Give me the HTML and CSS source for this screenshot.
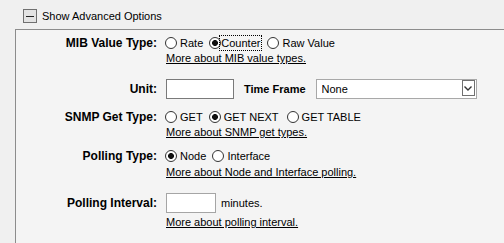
FILE: index.html
```html
<!DOCTYPE html>
<html lang="en">
<head>
  <meta charset="UTF-8">
  <title>Advanced Options</title>
  <link rel="stylesheet" href="styles.css">
</head>
<body>
<div class="toggle">
  <span class="toggle-box"><span class="minus"></span></span>
  <span>Show Advanced Options</span>
</div>
<div class="panel">
  <div class="row row-mib">
    <div class="label">MIB Value Type:</div>
    <div class="value">
      <div class="radios">
        <label class="opt"><input type="radio" name="mib"> Rate</label>
        <label class="opt"><input type="radio" name="mib" checked> <span class="focus">Counter</span></label>
        <label class="opt"><input type="radio" name="mib"> Raw Value</label>
      </div>
      <a href="#" class="more">More about MIB value types.</a>
    </div>
  </div>
  <div class="row row-unit">
    <div class="label">Unit:</div>
    <div class="value inline">
      <input type="text" class="text unit">
      <span class="sublabel">Time Frame</span>
      <div class="combo">
        <select>
          <option>None</option>
        </select>
        <span class="drop">
          <svg width="8" height="5" viewBox="0 0 8 5"><path d="M0.5 0.5 L4 4 L7.5 0.5" fill="none" stroke="#333" stroke-width="1.4"/></svg>
        </span>
      </div>
    </div>
  </div>
  <div class="row row-snmp">
    <div class="label">SNMP Get Type:</div>
    <div class="value">
      <div class="radios">
        <label class="opt"><input type="radio" name="snmp"> GET</label>
        <label class="opt wide"><input type="radio" name="snmp" checked> GET NEXT</label>
        <label class="opt"><input type="radio" name="snmp"> GET TABLE</label>
      </div>
      <a href="#" class="more">More about SNMP get types.</a>
    </div>
  </div>
  <div class="row row-poll">
    <div class="label">Polling Type:</div>
    <div class="value">
      <div class="radios">
        <label class="opt"><input type="radio" name="poll" checked> Node</label>
        <label class="opt"><input type="radio" name="poll"> Interface</label>
      </div>
      <a href="#" class="more">More about Node and Interface polling.</a>
    </div>
  </div>
  <div class="row row-interval">
    <div class="label">Polling Interval:</div>
    <div class="value">
      <div class="inline">
        <input type="text" class="text interval">
        <span>minutes.</span>
      </div>
      <a href="#" class="more more-interval">More about polling interval.</a>
    </div>
  </div>
</div>
</body>
</html>
```

FILE: styles.css
```css
body {
  margin: 0;
  background-color: #f0f0f0;
  font-family: "Liberation Sans", Arial, sans-serif;
  font-size: 11px;
  color: #000;
  height: 243px;
  overflow: hidden;
}
.toggle {
  display: flex;
  align-items: center;
  gap: 5px;
  padding: 9px 0 0 23px;
  line-height: 14px;
}
.toggle-box {
  width: 12px;
  height: 12px;
  border: 1px solid #707070;
  background-color: #e3e3e3;
  display: flex;
  align-items: center;
  justify-content: center;
}
.minus {
  width: 8px;
  height: 1px;
  background-color: #222;
}
.panel {
  margin: 6px 0 0 15px;
  border-top: 1px solid #8c8c8c;
  border-left: 1px solid #8c8c8c;
  background-color: #f4f4f4;
  height: 207px;
  padding-top: 6px;
}
.row {
  display: flex;
  align-items: flex-start;
}
.label {
  width: 141px;
  text-align: right;
  font-size: 12px;
  font-weight: bold;
  line-height: 14px;
  flex-shrink: 0;
}
.value {
  margin-left: 9px;
  line-height: 14px;
}
.inline {
  display: flex;
  align-items: center;
}
.radios {
  display: flex;
  align-items: center;
  height: 14px;
}
.opt {
  display: flex;
  align-items: center;
  margin-right: 7px;
  white-space: pre;
}
.opt.wide {
  margin-right: 9px;
}
.opt input {
  appearance: none;
  -webkit-appearance: none;
  width: 12px;
  height: 12px;
  margin: 0 0 0 -1px;
  border: 1px solid #333;
  border-radius: 50%;
  background-color: #fff;
}
.opt input:checked {
  background: radial-gradient(circle, #111 0, #111 2.6px, #fff 3.3px);
}
.focus {
  outline: 1px dotted #000;
  outline-offset: 0;
  padding: 0 1px;
  margin-left: -1px;
}
.more {
  display: block;
  margin-top: 1px;
  color: #000;
  text-decoration: underline;
}
.row-unit {
  margin-top: 14px;
  align-items: center;
}
.text {
  box-sizing: border-box;
  height: 20px;
  margin: 0;
  padding: 0 3px;
  background-color: #fff;
  font: inherit;
}
.unit {
  width: 68px;
  border: 1px solid #7a7a7a;
}
.sublabel {
  font-weight: bold;
  margin: 0 10px;
}
.combo {
  display: flex;
  align-items: flex-start;
  box-sizing: border-box;
  width: 161px;
  height: 20px;
  border: 1px solid #a8a8a8;
  background-color: #fff;
}
.combo select {
  appearance: none;
  -webkit-appearance: none;
  flex: 1;
  border: none;
  background: transparent;
  font: inherit;
  height: 18px;
  padding: 0 0 0 5px;
  margin: 0;
  outline: none;
}
.drop {
  box-sizing: border-box;
  width: 13px;
  height: 16px;
  margin: 0 1px 0 0;
  border: 1px solid #707070;
  display: flex;
  align-items: center;
  justify-content: center;
}
.row-snmp {
  margin-top: 11px;
}
.row-poll {
  margin-top: 10px;
}
.row-poll .more {
  margin-top: 2px;
}
.row-interval {
  margin-top: 14px;
}
.row-interval .label {
  line-height: 20px;
}
.interval {
  width: 50px;
  border: 1px solid #a5a5a5;
  margin-right: 5px;
}
.more-interval {
  margin-top: 2px;
}
```
